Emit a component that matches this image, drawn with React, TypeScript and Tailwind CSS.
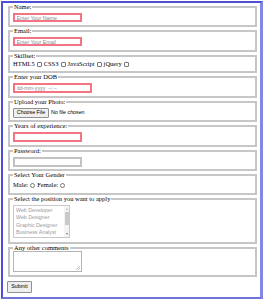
import type { ReactNode } from "react";

const serif = "font-['Liberation_Serif',serif]";
const sans = "font-['Liberation_Sans',Arial,sans-serif]";

function Box({ title, children, pad = "pt-[3px] pb-[3px]" }: { title: string; children: ReactNode; pad?: string }) {
  return (
    <fieldset className={`ml-[5px] mr-[3px] border-2 border-[#c6c6c6] px-[3px] ${pad}`}>
      <legend className={`px-[1px] text-[6.5px] leading-[7px] text-black ${serif}`}>{title}</legend>
      {children}
    </fieldset>
  );
}

const field = `block w-[69px] border-2 px-[1.5px] text-[5.3px] leading-none placeholder:text-[#8a8a8a] outline-none ${sans}`;
const red = "border-[#f37583]";
const grey = "border-[#c2c2c2]";

export default function App() {
  const positions = ["Web Developer", "Web Designer", "Graphic Designer", "Business Analyst"];

  return (
    <div className="m-[1px] box-border h-[298px] w-[262px] border-2 border-[#4e4ed6] border-r-[3px] border-r-[#8585e2] border-b-[#7373dc] bg-white">
      <form className="flex flex-col" onSubmit={(e) => e.preventDefault()}>
        <Box title="Name:">
          <input className={`${field} ${red} h-[9px]`} placeholder="Enter Your Name" />
        </Box>
        <Box title="Email:" pad="pt-[3px] pb-[4px]">
          <input className={`${field} ${red} h-[9px]`} placeholder="Enter Your Email" />
        </Box>
        <Box title="Skillset:" pad="pt-[1px] pb-[3px]">
          <div className={`flex h-[8px] items-center gap-[2px] text-[6.5px] ${serif}`}>
            {["HTML5", "CSS3", "JavaScript", "jQuery"].map((s) => (
              <label key={s} className="flex items-center gap-[2px]">
                {s}
                <input type="checkbox" className="h-[5px] w-[5px] appearance-none rounded-[1px] border border-[#777]" />
              </label>
            ))}
          </div>
        </Box>
        <Box title="Enter your DOB">
          <input className={`${field} ${red} h-[10px] w-[79px]`} placeholder="dd-mm-yyyy  --:--" readOnly />
        </Box>
        <Box title="Upload your Photo:" pad="pt-[3px] pb-[2px]">
          <div className={`flex h-[10px] items-center gap-[2px] text-[5.3px] ${sans}`}>
            <span className="flex h-[10px] w-[36px] items-center justify-center rounded-[1px] border border-[#8f8f8f] bg-[#efefef]">
              Choose File
            </span>
            <span>No file chosen</span>
          </div>
        </Box>
        <Box title="Years of experience:">
          <input className={`${field} ${red} h-[10px]`} />
        </Box>
        <Box title="Password:" pad="pt-[3px] pb-[2px]">
          <input type="password" className={`${field} ${grey} h-[10px]`} />
        </Box>
        <Box title="Select Your Gender" pad="pt-[3px] pb-[4px]">
          <div className={`flex h-[8px] items-center gap-[2px] text-[6.5px] ${serif}`}>
            <label className="flex items-center gap-[2px]">
              Male:
              <input type="radio" name="g" className="h-[5px] w-[5px] appearance-none rounded-full border border-[#777]" />
            </label>
            <label className="flex items-center gap-[2px]">
              Female:
              <input type="radio" name="g" className="h-[5px] w-[5px] appearance-none rounded-full border border-[#777]" />
            </label>
          </div>
        </Box>
        <Box title="Select the position you want to apply" pad="pt-[3px] pb-[4px]">
          <div className={`flex h-[33px] w-[57px] border border-[#c8c8c8] text-[5.3px] text-[#9a9a9a] ${sans}`}>
            <div className="flex flex-1 flex-col justify-center pl-[2px] leading-[7.5px]">
              {positions.map((p) => (
                <span key={p}>{p}</span>
              ))}
            </div>
            <div className="flex w-[5px] flex-col items-center bg-[#f4f4f4]">
              <span className="mt-[2px] h-0 w-0 border-x-[1.5px] border-b-[2px] border-x-transparent border-b-[#b5b5b5]" />
              <span className="mt-[2px] h-[13px] w-[4px] bg-[#c9c9c9]" />
              <span className="mt-auto mb-[2px] h-0 w-0 border-x-[1.5px] border-t-[2px] border-x-transparent border-t-[#777]" />
            </div>
          </div>
        </Box>
        <Box title="Any other comments" pad="pt-[0px] pb-[3px]">
          <div className="relative h-[21px] w-[69px] border border-[#b4b4b4]">
            <textarea className="h-full w-full resize-none outline-none" />
            <svg className="absolute bottom-[1px] right-[1px]" width="4" height="4" viewBox="0 0 4 4">
              <path d="M4 0L0 4M4 2L2 4" stroke="#999" strokeWidth="0.6" />
            </svg>
          </div>
        </Box>
        <div className="ml-[4px] mt-[4px]">
          <button
            type="submit"
            className={`flex h-[12px] w-[25px] items-center justify-center rounded-[1px] border border-[#8f8f8f] bg-[#efefef] text-[5.3px] ${sans}`}
          >
            Submit
          </button>
        </div>
      </form>
    </div>
  );
}
